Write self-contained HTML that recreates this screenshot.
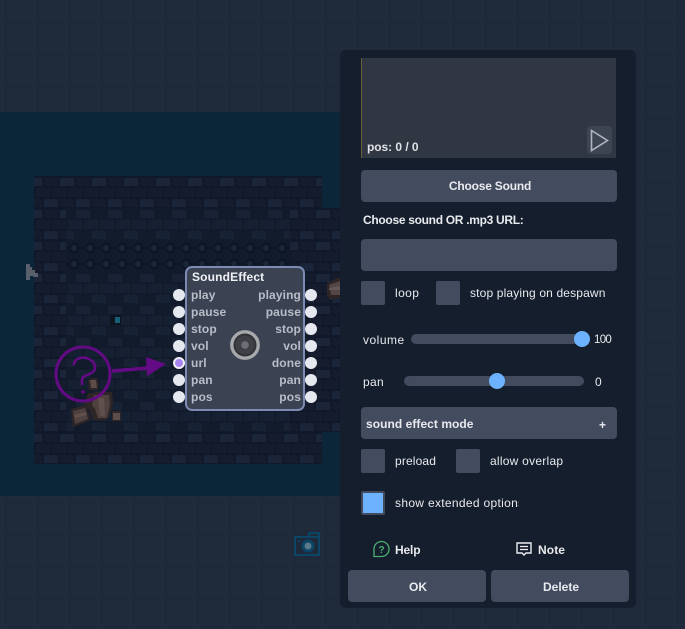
<!DOCTYPE html>
<html><head><meta charset="utf-8"><style>
html,body{margin:0;padding:0;background:#1e2a3a}
#r{position:relative;width:685px;height:629px;overflow:hidden;font-family:"Liberation Sans",sans-serif;color:#e8eaee}
#r svg.bg{position:absolute;left:0;top:0}
.a{position:absolute}
.t{position:absolute;white-space:nowrap;font-size:12px;line-height:14px;letter-spacing:.15px}
.b{font-weight:bold;letter-spacing:0}
.box{position:absolute;background:#434b5e;border-radius:4px}
.cb{position:absolute;width:24px;height:24px;background:#434b5e;border-radius:2px}
.c{text-align:center}
.p{position:absolute;width:12px;height:12px;border-radius:50%;background:#e6e8f0}
.l{position:absolute;font-size:12px;line-height:14px;font-weight:bold;color:#b9bdc7;letter-spacing:.12px;white-space:nowrap}
</style></head><body><div id="r">
<svg class="bg" width="685" height="629" xmlns="http://www.w3.org/2000/svg">
<defs>
<pattern id="g" width="32" height="32" patternUnits="userSpaceOnUse" x="1" y="0">
<rect width="32" height="32" fill="#1e2a3a"/>
<rect x="0" y="0" width="2" height="32" fill="#212d3d"/>
<rect x="0" y="16" width="32" height="1" fill="#212d3d"/>
</pattern>
<pattern id="w" width="32" height="32" patternUnits="userSpaceOnUse" x="34" y="176">
<rect width="32" height="32" fill="#10182a"/>
<rect x="10" y="2" width="14" height="8" fill="#141c2d"/>
<rect x="26" y="2" width="6" height="8" fill="#1a2539"/><rect x="0" y="2" width="8" height="8" fill="#1a2539"/>
<rect x="2" y="12" width="14" height="9" fill="#141c2d"/>
<rect x="18" y="12" width="14" height="9" fill="#141c2d"/>
<rect x="10" y="23" width="14" height="8" fill="#1a2539"/>
<rect x="26" y="23" width="6" height="8" fill="#141c2d"/><rect x="0" y="23" width="8" height="8" fill="#141c2d"/>
</pattern>
<pattern id="i" width="32" height="32" patternUnits="userSpaceOnUse" x="66" y="208">
<rect width="32" height="32" fill="#121b2b"/>
<rect x="10" y="2" width="14" height="8" fill="#172235"/>
<rect x="2" y="12" width="14" height="9" fill="#152033"/>
<rect x="18" y="12" width="14" height="9" fill="#152033"/>
<rect x="26" y="23" width="6" height="8" fill="#172235"/><rect x="0" y="23" width="8" height="8" fill="#172235"/>
</pattern>
<pattern id="ch" width="16" height="16" patternUnits="userSpaceOnUse" x="66" y="240">
<rect x="0" y="7" width="16" height="2" fill="#0e1626"/>
<circle cx="8" cy="8" r="5.5" fill="#0e1626"/>
<circle cx="8" cy="8" r="3" fill="#192538"/>
</pattern>
</defs>
<rect width="685" height="629" fill="url(#g)"/>
<rect x="0" y="112" width="345" height="384" fill="#0a2638"/>
<rect x="34" y="176" width="288" height="288" fill="url(#w)"/>
<rect x="290" y="208" width="50" height="224" fill="url(#w)"/>
<rect x="66" y="208" width="224" height="224" fill="url(#i)"/>
<rect x="66" y="240" width="224" height="32" fill="#121b2b"/>
<rect x="66" y="240" width="224" height="32" fill="url(#ch)"/>
<path d="M26 264h4v3h2v3h3v3h3v4h-5v-1h-3v4h-4z" fill="#5a606b"/>
<rect x="110" y="315" width="11" height="10" fill="#0d1420"/>
<rect x="115" y="317" width="5" height="6" fill="#176074"/>
<path d="M88 380l4-2h5l2 6-1 6h-9z" fill="#2e2527"/>
<path d="M90 380h6l1 8h-6z" fill="#5c4d4b"/>
<path d="M88 393h7v-1h17l1 10-3 14-5 4h-12l-4-10-5-4z" fill="#2e2527"/>
<path d="M94 395h15l1 10-3 13h-9l-3-9-3-4z" fill="#4f4140"/>
<path d="M98 398h6l1 18h-5z" fill="#5f504e"/>
<path d="M71 409l15-4 5 15-18 7z" fill="#2e2527"/>
<path d="M73 411l12-3 3 11-13 5z" fill="#4f4140"/>
<path d="M74 415l12-3 1 3-12 3z" fill="#5f504e"/>
<rect x="112" y="411" width="9" height="10" fill="#2e2527"/>
<rect x="113" y="413" width="7" height="7" fill="#5c4d4b"/>
<path d="M327 283l13-6v21l-10 2-3-5z" fill="#2e2527"/>
<path d="M329 285l11-4v14h-9z" fill="#534644"/>
<path d="M329 288l11-2v4h-11z" fill="#665856"/>
<circle cx="83" cy="374" r="27" fill="none" stroke="#640a85" stroke-width="3"/>
<path d="M74 364c1-6 9-8 15-5 6 3 8 9 4 13-3 3-11 3-11 8v4" fill="none" stroke="#640a85" stroke-width="2.6" stroke-linecap="round"/>
<circle cx="83" cy="392" r="1.8" fill="#640a85"/>
<path d="M112 371l36-3" stroke="#640a85" stroke-width="3.5"/>
<path d="M146 357l20 7-19 12z" fill="#640a85"/>
<g fill="none" stroke="#0c4566" stroke-width="2">
<rect x="295" y="537" width="24" height="18"/>
<path d="M309 536v-3h10v4"/>
<circle cx="308" cy="546" r="5" stroke-width="3"/>
</g>
<circle cx="308" cy="546" r="3.5" fill="#5b7a8c"/>
<rect x="298" y="540" width="2" height="2" fill="#0c4566"/>
</svg>

<div class="a" style="left:185px;top:266px;width:116px;height:141px;background:#3b4252;border:2px solid #7c8ab4;border-radius:7px"></div>
<div class="t b" style="left:192px;top:270px;color:#f0f1f4;letter-spacing:.15px">SoundEffect</div>
<div class="p" style="left:173px;top:289px"></div>
<div class="p" style="left:173px;top:306px"></div>
<div class="p" style="left:173px;top:323px"></div>
<div class="p" style="left:173px;top:340px"></div>
<div class="p" style="left:173px;top:357px;box-sizing:border-box;border:2px solid #f0f0f6;background:#a884f0"></div>
<div class="p" style="left:173px;top:374px"></div>
<div class="p" style="left:173px;top:391px"></div>
<div class="p" style="left:305px;top:289px"></div>
<div class="p" style="left:305px;top:306px"></div>
<div class="p" style="left:305px;top:323px"></div>
<div class="p" style="left:305px;top:340px"></div>
<div class="p" style="left:305px;top:357px"></div>
<div class="p" style="left:305px;top:374px"></div>
<div class="p" style="left:305px;top:391px"></div>
<div class="l" style="left:191px;top:288px">play</div>
<div class="l" style="left:191px;top:305px">pause</div>
<div class="l" style="left:191px;top:322px">stop</div>
<div class="l" style="left:191px;top:339px">vol</div>
<div class="l" style="left:191px;top:356px">url</div>
<div class="l" style="left:191px;top:373px">pan</div>
<div class="l" style="left:191px;top:390px">pos</div>
<div class="l" style="right:384px;top:288px">playing</div>
<div class="l" style="right:384px;top:305px">pause</div>
<div class="l" style="right:384px;top:322px">stop</div>
<div class="l" style="right:384px;top:339px">vol</div>
<div class="l" style="right:384px;top:356px">done</div>
<div class="l" style="right:384px;top:373px">pan</div>
<div class="l" style="right:384px;top:390px">pos</div>
<svg class="a" style="left:228px;top:328px" width="34" height="34">
<circle cx="17" cy="17" r="13.2" fill="#303238" stroke="#a6a8ab" stroke-width="3.4"/>
<circle cx="17" cy="17" r="9.5" fill="#3e4046"/>
<circle cx="17" cy="17" r="3.8" fill="#6c6f75"/>
</svg>

<div class="a" style="left:340px;top:50px;width:296px;height:558px;background:#151e2c;border-radius:6px"></div>
<div class="a" style="left:361px;top:58px;width:255px;height:100px;background:#303642"></div>
<div class="a" style="left:361px;top:58px;width:1px;height:100px;background:#6e5e38"></div>
<div class="t b" style="left:367px;top:140px;color:#dfe1e6;letter-spacing:-.05px">pos: 0 / 0</div>
<div class="a" style="left:587px;top:126px;width:25px;height:28px;background:#3d4452;border-radius:4px"></div>
<svg class="a" style="left:587px;top:126px" width="25" height="28"><path d="M4.5 4.5l16 10-16 10z" fill="none" stroke="#b0b4bc" stroke-width="1.6"/></svg>
<div class="box" style="left:361px;top:170px;width:256px;height:32px"></div>
<div class="t b c" style="left:361px;top:179px;width:258px;letter-spacing:-.2px">Choose Sound</div>
<div class="t b" style="left:363px;top:213px;letter-spacing:-.3px">Choose sound OR .mp3 URL:</div>
<div class="box" style="left:361px;top:239px;width:256px;height:32px"></div>
<div class="cb" style="left:361px;top:281px"></div><div class="t" style="left:395px;top:286px;letter-spacing:.4px">loop</div>
<div class="cb" style="left:436px;top:281px"></div><div class="t" style="left:470px;top:286px">stop playing on despawn</div>
<div class="t" style="left:363px;top:333px;letter-spacing:.5px">volume</div>
<div class="a" style="left:411px;top:334px;width:171px;height:10px;border-radius:5px;background:#434b5e"></div>
<div class="a" style="left:574px;top:331px;width:16px;height:16px;border-radius:50%;background:#6cb2ff"></div>
<div class="t" style="left:594px;top:333px;letter-spacing:-.7px;font-size:11.5px">100</div>
<div class="t" style="left:363px;top:375px;letter-spacing:.3px">pan</div>
<div class="a" style="left:404px;top:376px;width:180px;height:10px;border-radius:5px;background:#434b5e"></div>
<div class="a" style="left:489px;top:373px;width:16px;height:16px;border-radius:50%;background:#6cb2ff"></div>
<div class="t" style="left:595px;top:375px;letter-spacing:0">0</div>
<div class="box" style="left:361px;top:407px;width:256px;height:32px"></div>
<div class="t b" style="left:366px;top:417px;letter-spacing:.05px">sound effect mode</div>
<div class="t b" style="left:599px;top:418px">+</div>
<div class="cb" style="left:361px;top:449px"></div><div class="t" style="left:395px;top:454px">preload</div>
<div class="cb" style="left:456px;top:449px"></div><div class="t" style="left:490px;top:454px;letter-spacing:.25px">allow overlap</div>
<div class="cb" style="left:361px;top:491px;box-sizing:border-box;border:2px solid #434b5e;background:#6cb2ff"></div>
<div class="t" style="left:395px;top:496px;width:124px;overflow:hidden;letter-spacing:.32px">show extended options</div>
<svg class="a" style="left:372px;top:540px" width="18" height="18"><path d="M2 9a7.5 7.5 0 1 1 7.5 7.5H2z" fill="none" stroke="#4caf70" stroke-width="1.3"/><text x="9.5" y="13" font-size="10" font-weight="bold" font-family="Liberation Sans" fill="#4caf70" text-anchor="middle">?</text></svg>
<div class="t b" style="left:395px;top:543px;letter-spacing:-.15px">Help</div>
<svg class="a" style="left:515px;top:541px" width="18" height="17"><path d="M2 2h14v10h-5l-2 2-2-2H2z" fill="none" stroke="#eceef2" stroke-width="1.4"/><path d="M5 5.5h8M5 8.5h8" stroke="#eceef2" stroke-width="1.2"/></svg>
<div class="t b" style="left:538px;top:543px;letter-spacing:.1px">Note</div>
<div class="box" style="left:348px;top:570px;width:138px;height:32px"></div>
<div class="t b c" style="left:348px;top:580px;width:140px">OK</div>
<div class="box" style="left:491px;top:570px;width:138px;height:32px"></div>
<div class="t b c" style="left:491px;top:580px;width:140px">Delete</div>
</div></body></html>
